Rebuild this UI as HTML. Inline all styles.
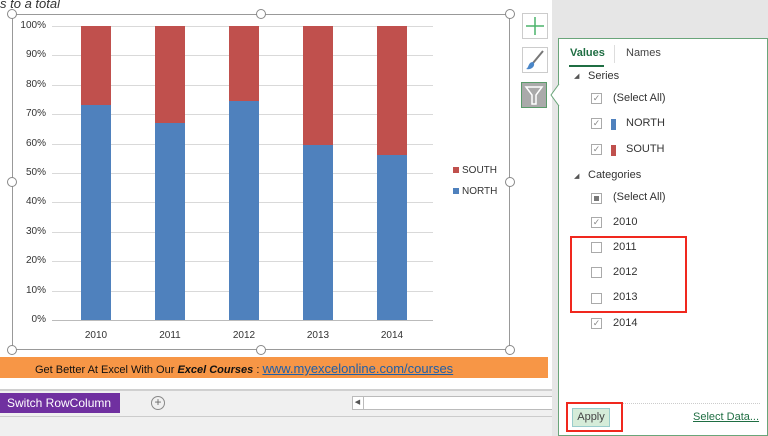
<!DOCTYPE html><html><head><style>
*{margin:0;padding:0;box-sizing:border-box}
body{width:768px;height:436px;position:relative;overflow:hidden;background:#fff;font-family:"Liberation Sans",sans-serif}
.a{position:absolute}
.yl{position:absolute;left:18px;width:28px;text-align:right;font-size:10px;color:#333}
.gl{position:absolute;left:52px;width:381px;height:1px;background:#d9d9d9}
.bar{position:absolute;width:30px}
.xl{position:absolute;top:330px;font-size:10px;color:#333;width:40px;text-align:center}
.h{position:absolute;width:10px;height:10px;border:1.5px solid #888;border-radius:50%;background:#fff}
.cb{position:absolute;width:11px;height:11px;border:1px solid #aaa;background:#fff;font-size:9px;color:#888;line-height:9px;text-align:center}
.pt{position:absolute;font-size:11px;color:#333}
</style></head><body>
<div class="a" style="left:0;top:-4px;font-size:13px;font-style:italic;color:#333">s to a total</div>
<div class="a" style="left:12px;top:14px;width:498px;height:336px;border:1px solid #999"></div>
<div class="yl" style="top:20px">100%</div><div class="yl" style="top:49px">90%</div><div class="yl" style="top:79px">80%</div><div class="yl" style="top:108px">70%</div><div class="yl" style="top:138px">60%</div><div class="yl" style="top:167px">50%</div><div class="yl" style="top:196px">40%</div><div class="yl" style="top:226px">30%</div><div class="yl" style="top:255px">20%</div><div class="yl" style="top:285px">10%</div><div class="yl" style="top:314px">0%</div>
<div class="gl" style="top:26px"></div><div class="gl" style="top:55px"></div><div class="gl" style="top:85px"></div><div class="gl" style="top:114px"></div><div class="gl" style="top:144px"></div><div class="gl" style="top:173px"></div><div class="gl" style="top:202px"></div><div class="gl" style="top:232px"></div><div class="gl" style="top:261px"></div><div class="gl" style="top:291px"></div><div class="gl" style="top:320px;background:#bbb"></div>
<div class="bar" style="left:81px;top:26px;height:79px;background:#c0504d"></div><div class="bar" style="left:81px;top:105px;height:215px;background:#4f81bd"></div>
<div class="bar" style="left:155px;top:26px;height:97px;background:#c0504d"></div><div class="bar" style="left:155px;top:123px;height:197px;background:#4f81bd"></div>
<div class="bar" style="left:229px;top:26px;height:75px;background:#c0504d"></div><div class="bar" style="left:229px;top:101px;height:219px;background:#4f81bd"></div>
<div class="bar" style="left:303px;top:26px;height:119px;background:#c0504d"></div><div class="bar" style="left:303px;top:145px;height:175px;background:#4f81bd"></div>
<div class="bar" style="left:377px;top:26px;height:129px;background:#c0504d"></div><div class="bar" style="left:377px;top:155px;height:165px;background:#4f81bd"></div>
<div class="xl" style="left:76px">2010</div><div class="xl" style="left:150px">2011</div><div class="xl" style="left:224px">2012</div><div class="xl" style="left:298px">2013</div><div class="xl" style="left:372px">2014</div>
<div class="a" style="left:453px;top:167px;width:6px;height:6px;background:#c0504d"></div><div class="a" style="left:462px;top:165px;font-size:10px;color:#333">SOUTH</div>
<div class="a" style="left:453px;top:188px;width:6px;height:6px;background:#4f81bd"></div><div class="a" style="left:462px;top:186px;font-size:10px;color:#333">NORTH</div>
<div class="h" style="left:7px;top:9px"></div><div class="h" style="left:256px;top:9px"></div><div class="h" style="left:505px;top:9px"></div>
<div class="h" style="left:7px;top:177px"></div><div class="h" style="left:505px;top:177px"></div>
<div class="h" style="left:7px;top:345px"></div><div class="h" style="left:256px;top:345px"></div><div class="h" style="left:505px;top:345px"></div>
<div class="a" style="left:0;top:357px;width:548px;height:21px;background:#f79646"></div>
<div class="a" style="left:35px;top:361px;font-size:11px;color:#111;white-space:nowrap">Get Better At Excel With Our <b><i>Excel Courses</i></b> : <span style="color:#1f5fa8;text-decoration:underline;font-size:13px">www.myexcelonline.com/courses</span></div>
<div class="a" style="left:0;top:389px;width:560px;height:47px;background:#f0f0f0;border-top:2px solid #d0d0d0"></div>
<div class="a" style="left:0;top:393px;width:120px;height:20px;background:#7030a0;color:#fff;font-size:12px;padding:3px 0 0 7px">Switch RowColumn</div>
<div class="a" style="left:151px;top:396px;width:14px;height:14px;border:1px solid #888;border-radius:50%;font-size:12px;line-height:11px;text-align:center;color:#666">+</div>
<div class="a" style="left:352px;top:396px;width:210px;height:14px;background:#fff;border:1px solid #bbb"></div>
<div class="a" style="left:352px;top:396px;width:12px;height:14px;border-right:1px solid #bbb;font-size:7px;text-align:center;line-height:13px;color:#555">◀</div>
<div class="a" style="left:0;top:416px;width:560px;height:1px;background:#ccc"></div>
<div class="a" style="left:552px;top:0;width:216px;height:436px;background:#e6e6e6"></div>
<div class="a" style="left:522px;top:13px;width:26px;height:26px;background:#fff;border:1px solid #ccc"><svg width="24" height="24"><path d="M12 3V21M3 12H21" stroke="#4cb36b" stroke-width="1.5"/></svg></div>
<div class="a" style="left:522px;top:47px;width:26px;height:26px;background:#fff;border:1px solid #ccc"><svg width="24" height="24"><path d="M20 3L10 15" stroke="#777" stroke-width="2"/><path d="M10 14C5 14 6 20 3 21C8 22 12 19 11 15Z" fill="#4a86c8"/></svg></div>
<div class="a" style="left:521px;top:82px;width:26px;height:26px;background:#aaa;border:1px solid #5a9a6a"><svg width="24" height="24"><path d="M4 4H20L14 12V21H10V12Z" fill="none" stroke="#fff" stroke-width="1.5"/></svg></div>
<div class="a" style="left:558px;top:38px;width:210px;height:398px;background:#fff;border:1px solid #6aa57a"></div>
<svg class="a" style="left:549px;top:84px" width="11" height="22"><path d="M10 0L2 11L10 22" fill="#fff" stroke="#6aa57a"/></svg>
<div class="a" style="left:570px;top:47px;font-size:11px;font-weight:bold;color:#1f6e43">Values</div>
<div class="a" style="left:569px;top:65px;width:35px;height:2px;background:#1f6e43"></div>
<div class="a" style="left:614px;top:45px;width:1px;height:18px;background:#ddd"></div>
<div class="a" style="left:626px;top:47px;font-size:11px;color:#444">Names</div>
<div class="pt" style="left:574px;top:72px;font-size:7px;color:#555">◢</div><div class="pt" style="left:588px;top:70px">Series</div>
<div class="cb" style="left:591px;top:93px">✓</div><div class="pt" style="left:613px;top:92px">(Select All)</div>
<div class="cb" style="left:591px;top:118px">✓</div><div class="a" style="left:611px;top:119px;width:5px;height:11px;background:#4f81bd"></div><div class="pt" style="left:626px;top:117px">NORTH</div>
<div class="cb" style="left:591px;top:144px">✓</div><div class="a" style="left:611px;top:145px;width:5px;height:11px;background:#c0504d"></div><div class="pt" style="left:626px;top:143px">SOUTH</div>
<div class="pt" style="left:574px;top:172px;font-size:7px;color:#555">◢</div><div class="pt" style="left:588px;top:169px">Categories</div>
<div class="cb" style="left:591px;top:193px"><div style="margin:2px;width:5px;height:5px;background:#777"></div></div><div class="pt" style="left:613px;top:191px">(Select All)</div>
<div class="cb" style="left:591px;top:217px">✓</div><div class="pt" style="left:613px;top:216px">2010</div>
<div class="cb" style="left:591px;top:242px"></div><div class="pt" style="left:613px;top:241px">2011</div>
<div class="cb" style="left:591px;top:267px"></div><div class="pt" style="left:613px;top:266px">2012</div>
<div class="cb" style="left:591px;top:293px"></div><div class="pt" style="left:613px;top:291px">2013</div>
<div class="cb" style="left:591px;top:318px">✓</div><div class="pt" style="left:613px;top:317px">2014</div>
<div class="a" style="left:570px;top:236px;width:117px;height:77px;border:2px solid #f0281e"></div>
<div class="a" style="left:575px;top:403px;width:185px;border-top:1px dotted #ccc"></div>
<div class="a" style="left:566px;top:402px;width:57px;height:30px;border:2px solid #f0281e"></div>
<div class="a" style="left:572px;top:408px;width:38px;height:19px;background:#d5ecd9;border:1px solid #9cc;font-size:11px;color:#444;text-align:center;line-height:17px">Apply</div>
<div class="a" style="left:693px;top:411px;font-size:11px;color:#1f6e43;text-decoration:underline">Select Data...</div>
</body></html>
